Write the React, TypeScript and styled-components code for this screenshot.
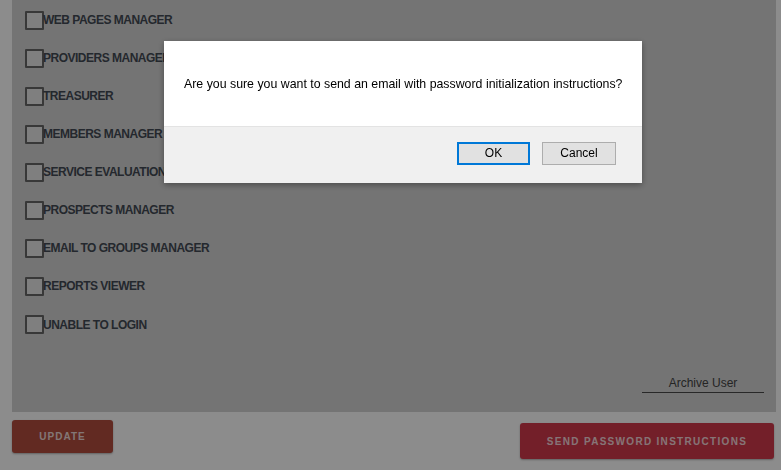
import React from 'react';
import styled, { createGlobalStyle } from 'styled-components';

const GlobalStyle = createGlobalStyle`
  html, body {
    margin: 0;
    padding: 0;
    background: #fff;
    font-family: "Liberation Sans", Arial, sans-serif;
  }
`;

const Page = styled.div`
  width: 781px;
  height: 470px;
  overflow: hidden;
  background: #fff;
`;

const Panel = styled.div`
  margin-left: 12px;
  width: 764px;
  height: 412px;
  background: #d3d3d3;
  display: flex;
  flex-direction: column;
  box-sizing: border-box;
  padding: 1px 12px 0 13px;
`;

const RoleList = styled.ul`
  list-style: none;
  margin: 0;
  padding: 0;
`;

const RoleRow = styled.li<{ $tall?: boolean }>`
  display: flex;
  align-items: center;
  height: ${p => (p.$tall ? 39 : 38)}px;
`;

const Box = styled.span`
  display: inline-block;
  width: 19px;
  height: 19px;
  margin-right: -1px;
  box-sizing: border-box;
  border: 2px solid #666;
  background: #e8e8e8;
  border-radius: 1px;
`;

const RoleLabel = styled.span`
  font-size: 12px;
  font-weight: bold;
  color: #434a54;
  letter-spacing: -0.5px;
`;

const ArchiveWrap = styled.div`
  margin-top: auto;
  margin-bottom: 19px;
  align-self: flex-end;
  width: 122px;
  border-bottom: 1px solid #4a4a4a;
  text-align: center;
  font-size: 12px;
  color: #444;
  padding-bottom: 2px;
  box-sizing: border-box;
`;

const ActionBar = styled.div`
  display: flex;
  justify-content: space-between;
  align-items: flex-start;
  padding: 8px 7px 0 12px;
`;

const ActionButton = styled.button<{ $tone: 'update' | 'send' }>`
  border: none;
  border-radius: 3px;
  color: rgba(255, 255, 255, 0.8);
  font-family: "Liberation Sans", Arial, sans-serif;
  font-weight: bold;
  font-size: 10px;
  box-shadow: 0 1px 2px rgba(0, 0, 0, 0.3);
  background: ${p => (p.$tone === 'update' ? '#b34d3f' : '#d13a4c')};
  width: ${p => (p.$tone === 'update' ? 101 : 254)}px;
  height: ${p => (p.$tone === 'update' ? 33 : 36)}px;
  margin-top: ${p => (p.$tone === 'update' ? 0 : 3)}px;
  letter-spacing: ${p => (p.$tone === 'update' ? 1 : 1.3)}px;
  padding: 0;
`;

const Backdrop = styled.div`
  position: fixed;
  inset: 0;
  background: rgba(0, 0, 0, 0.45);
`;

const Dialog = styled.div`
  position: fixed;
  top: 41px;
  left: 164px;
  width: 478px;
  height: 142px;
  background: #f0f0f0;
  box-shadow: 0 2px 6px rgba(0, 0, 0, 0.35);
  display: flex;
  flex-direction: column;
  font-family: "Liberation Sans", Arial, sans-serif;
`;

const DialogBody = styled.div`
  height: 86px;
  background: #fff;
  border-bottom: 1px solid #e3e3e3;
  box-sizing: border-box;
  display: flex;
  align-items: center;
  padding-left: 20px;
  font-size: 12.35px;
  color: #000;
`;

const DialogFooter = styled.div`
  display: flex;
  justify-content: flex-end;
  gap: 12px;
  padding: 15px 26px 0 0;
`;

const DialogButton = styled.button<{ $primary?: boolean }>`
  width: ${p => (p.$primary ? 73 : 74)}px;
  height: 23px;
  box-sizing: border-box;
  background: #e1e1e1;
  border: ${p => (p.$primary ? '2px solid #0078d7' : '1px solid #adadad')};
  font-family: "Liberation Sans", Arial, sans-serif;
  font-size: 12px;
  color: #000;
  padding: 0 0 1px;
`;

const roles = [
  'WEB PAGES MANAGER',
  'PROVIDERS MANAGER',
  'TREASURER',
  'MEMBERS MANAGER',
  'SERVICE EVALUATION MANAGER',
  'PROSPECTS MANAGER',
  'EMAIL TO GROUPS MANAGER',
  'REPORTS VIEWER',
  'UNABLE TO LOGIN',
];

export default function App() {
  return (
    <>
      <GlobalStyle />
      <Page>
        <Panel>
          <RoleList>
            {roles.map((role, i) => (
              <RoleRow key={role} $tall={i === roles.length - 1}>
                <Box />
                <RoleLabel>{role}</RoleLabel>
              </RoleRow>
            ))}
          </RoleList>
          <ArchiveWrap>Archive User</ArchiveWrap>
        </Panel>
        <ActionBar>
          <ActionButton $tone="update">UPDATE</ActionButton>
          <ActionButton $tone="send">SEND PASSWORD INSTRUCTIONS</ActionButton>
        </ActionBar>
      </Page>
      <Backdrop />
      <Dialog>
        <DialogBody>Are you sure you want to send an email with password initialization instructions?</DialogBody>
        <DialogFooter>
          <DialogButton $primary>OK</DialogButton>
          <DialogButton>Cancel</DialogButton>
        </DialogFooter>
      </Dialog>
    </>
  );
}
